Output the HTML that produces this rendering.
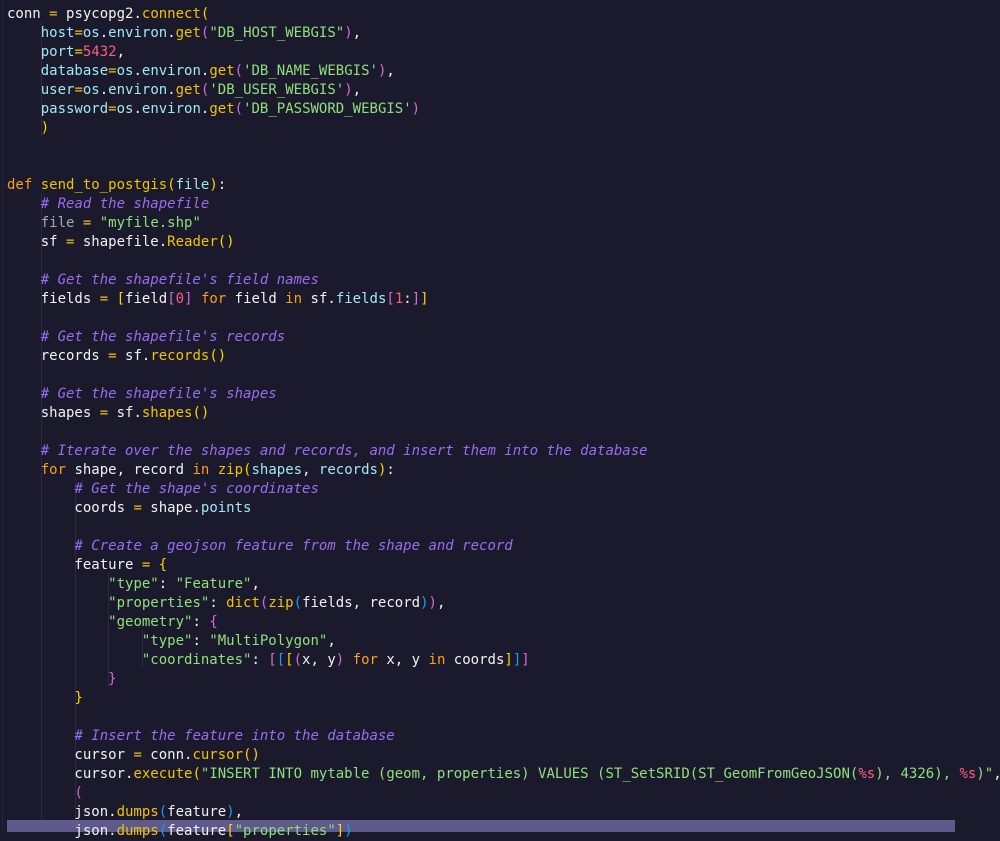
<!DOCTYPE html>
<html><head><meta charset="utf-8"><style>
html,body{margin:0;padding:0;background:#1b1a2c;width:1000px;height:831px;overflow:hidden}
pre{margin:0;position:absolute;left:7px;top:5px;font-family:"DejaVu Sans Mono","Liberation Mono",monospace;font-size:14px;line-height:19px;color:#f2f2f2;white-space:pre}
.c{color:#9a6cf2;font-style:italic}.k{color:#ff9d1f}.f{color:#f0c400}.s{color:#8fe07c}.n{color:#ff5c85}.v{color:#9fe8f5}
.y{color:#ffd200}.p{color:#d46ad6}.b{color:#1f9cf0}.g{color:#a0a8b8}.o{color:#f0c400}
.sel{position:absolute;left:7px;top:820px;width:948px;height:12px;background:#5f5a8c}
.gd{position:absolute;width:1px;background:#2c2a40}
</style></head><body>
<div class="gd" style="left:2px;top:0;height:831px;background:#252338"></div>
<div class="gd" style="left:41px;top:22px;height:114px"></div>
<div class="gd" style="left:41px;top:193px;height:638px"></div>
<div class="gd" style="left:75px;top:478px;height:353px"></div>
<div class="gd" style="left:108px;top:573px;height:114px"></div>
<div class="gd" style="left:142px;top:630px;height:38px"></div>
<div class="sel"></div>
<pre>conn <span class="o">=</span> psycopg2.<span class="f">connect</span><span class="y">(</span>
    <span class="v">host</span><span class="o">=</span><span class="v">os</span>.<span class="v">environ</span>.<span class="f">get</span><span class="p">(</span><span class="s">"DB_HOST_WEBGIS"</span><span class="p">)</span>,
    <span class="v">port</span><span class="o">=</span><span class="n">5432</span>,
    <span class="v">database</span><span class="o">=</span><span class="v">os</span>.<span class="v">environ</span>.<span class="f">get</span><span class="p">(</span><span class="s">'DB_NAME_WEBGIS'</span><span class="p">)</span>,
    <span class="v">user</span><span class="o">=</span><span class="v">os</span>.<span class="v">environ</span>.<span class="f">get</span><span class="p">(</span><span class="s">'DB_USER_WEBGIS'</span><span class="p">)</span>,
    <span class="v">password</span><span class="o">=</span><span class="v">os</span>.<span class="v">environ</span>.<span class="f">get</span><span class="p">(</span><span class="s">'DB_PASSWORD_WEBGIS'</span><span class="p">)</span>
    <span class="y">)</span>


<span class="k">def</span> <span class="f">send_to_postgis</span><span class="y">(</span><span class="v">file</span><span class="y">)</span>:
    <span class="c"># Read the shapefile</span>
    <span class="g">file</span> <span class="o">=</span> <span class="s">"myfile.shp"</span>
    sf <span class="o">=</span> shapefile.<span class="f">Reader</span><span class="y">()</span>

    <span class="c"># Get the shapefile's field names</span>
    fields <span class="o">=</span> <span class="y">[</span>field<span class="p">[</span><span class="n">0</span><span class="p">]</span> <span class="k">for</span> field <span class="k">in</span> sf.<span class="v">fields</span><span class="p">[</span><span class="n">1</span>:<span class="p">]</span><span class="y">]</span>

    <span class="c"># Get the shapefile's records</span>
    records <span class="o">=</span> sf.<span class="f">records</span><span class="y">()</span>

    <span class="c"># Get the shapefile's shapes</span>
    shapes <span class="o">=</span> sf.<span class="f">shapes</span><span class="y">()</span>

    <span class="c"># Iterate over the shapes and records, and insert them into the database</span>
    <span class="k">for</span> shape, record <span class="k">in</span> <span class="f">zip</span><span class="y">(</span><span class="v">shapes</span>, <span class="v">records</span><span class="y">)</span>:
        <span class="c"># Get the shape's coordinates</span>
        coords <span class="o">=</span> shape.<span class="v">points</span>

        <span class="c"># Create a geojson feature from the shape and record</span>
        feature <span class="o">=</span> <span class="y">{</span>
            <span class="s">"type"</span>: <span class="s">"Feature"</span>,
            <span class="s">"properties"</span>: <span class="f">dict</span><span class="p">(</span><span class="f">zip</span><span class="b">(</span>fields, record<span class="b">)</span><span class="p">)</span>,
            <span class="s">"geometry"</span>: <span class="p">{</span>
                <span class="s">"type"</span>: <span class="s">"MultiPolygon"</span>,
                <span class="s">"coordinates"</span>: <span class="p">[</span><span class="b">[</span><span class="y">[</span><span class="p">(</span>x, y<span class="p">)</span> <span class="k">for</span> x, y <span class="k">in</span> coords<span class="y">]</span><span class="b">]</span><span class="p">]</span>
            <span class="p">}</span>
        <span class="y">}</span>

        <span class="c"># Insert the feature into the database</span>
        cursor <span class="o">=</span> conn.<span class="f">cursor</span><span class="y">()</span>
        cursor.<span class="f">execute</span><span class="y">(</span><span class="s">"INSERT INTO mytable (geom, properties) VALUES (ST_SetSRID(ST_GeomFromGeoJSON(<span class="n">%s</span>), 4326), <span class="n">%s</span>)"</span>,
        <span class="p">(</span>
        json.<span class="f">dumps</span><span class="b">(</span>feature<span class="b">)</span>,
        json.<span class="f">dumps</span><span class="b">(</span>feature<span class="y">[</span><span class="s">"properties"</span><span class="y">]</span><span class="b">)</span></pre>
</body></html>
